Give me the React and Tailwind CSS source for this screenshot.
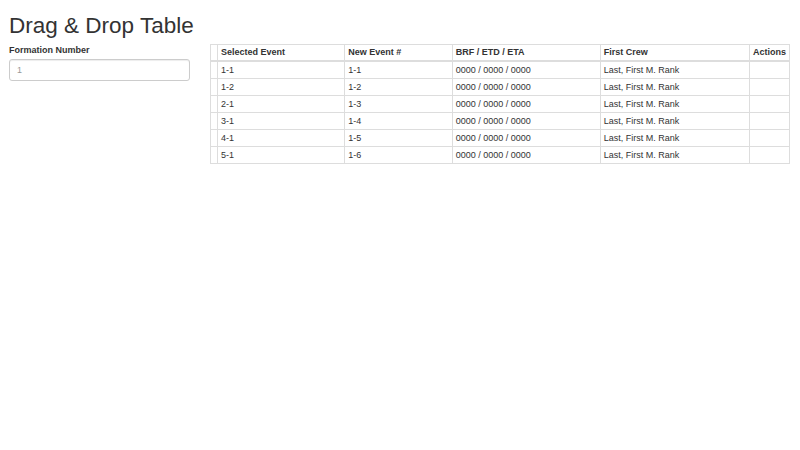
import React from 'react';

const rows = [
  { selected: '1-1', next: '1-1' },
  { selected: '1-2', next: '1-2' },
  { selected: '2-1', next: '1-3' },
  { selected: '3-1', next: '1-4' },
  { selected: '4-1', next: '1-5' },
  { selected: '5-1', next: '1-6' },
];

function App() {
  return (
    <div className="min-h-[450px] bg-white pl-[9px] pr-[10px] text-[#333] font-['Liberation_Sans',Arial,sans-serif]">
      <h1 className="pt-[14px] text-[22.5px] leading-[24px] font-normal">Drag &amp; Drop Table</h1>

      <div className="flex items-start">
        {/* Left column */}
        <div className="w-[181px] pt-[6px]">
          <label className="block text-[9px] leading-[13px] font-bold">Formation Number</label>
          <input
            type="text"
            placeholder="1"
            className="mt-[2px] block w-full h-[22px] px-[7px] text-[9px] border border-[#ccc] rounded-[3px] shadow-[inset_0_1px_1px_rgba(0,0,0,0.075)] placeholder:text-[#999] focus:outline-none"
          />
        </div>

        {/* Table */}
        <div className="ml-[20px] flex-1 pt-[6px]">
          <table className="w-full border-collapse border border-[#ddd] text-[9px] leading-[15px]">
            <thead>
              <tr className="border-b-2 border-[#ddd]">
                <th className="w-[7px] border-r border-[#ddd] p-0"></th>
                <th className="w-[128px] border-r border-[#ddd] px-[3px] text-left align-bottom font-bold">Selected Event</th>
                <th className="w-[108px] border-r border-[#ddd] px-[3px] text-left align-bottom font-bold">New Event #</th>
                <th className="w-[149px] border-r border-[#ddd] px-[3px] text-left align-bottom font-bold">BRF / ETD / ETA</th>
                <th className="w-[150px] border-r border-[#ddd] px-[3px] text-left align-bottom font-bold">First Crew</th>
                <th className="border-r border-[#ddd] px-[3px] text-left align-bottom font-bold">Actions</th>
              </tr>
            </thead>
            <tbody>
              {rows.map((row) => (
                <tr key={row.selected} className="border-t border-[#ddd]">
                  <td className="border-r border-[#ddd] p-0"></td>
                  <td className="border-r border-[#ddd] px-[3px] leading-[16px]">{row.selected}</td>
                  <td className="border-r border-[#ddd] px-[3px] leading-[16px]">{row.next}</td>
                  <td className="border-r border-[#ddd] px-[3px] leading-[16px]">0000 / 0000 / 0000</td>
                  <td className="border-r border-[#ddd] px-[3px] leading-[16px]">Last, First M. Rank</td>
                  <td className="border-r border-[#ddd] px-[3px] leading-[16px]"></td>
                </tr>
              ))}
            </tbody>
          </table>
        </div>
      </div>
    </div>
  );
}

export default App;
